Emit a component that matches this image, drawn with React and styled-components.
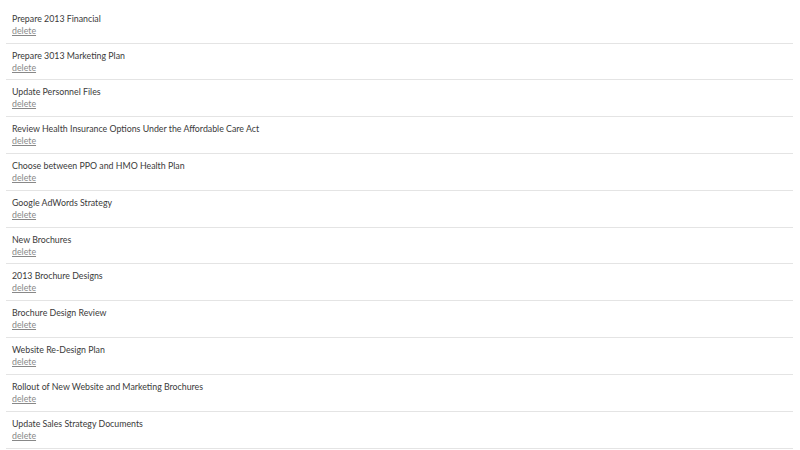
import React from "react";
import styled, { createGlobalStyle } from "styled-components";

const GlobalStyle = createGlobalStyle`
  body {
    margin: 0;
    background: #fff;
    font-family: Lato, "Open Sans", sans-serif;
  }
`;

const List = styled.ul`
  list-style: none;
  margin: 0;
  padding: 6.8px 7px 0 6px;
`;

const Row = styled.li`
  padding: 6px;
  height: 23.82px;
  border-bottom: 1px solid #e4e4e4;
  display: flex;
  flex-direction: column;
`;

const Title = styled.div`
  font-size: 8.8px;
  line-height: 12px;
  color: #3a3a3a;
  white-space: nowrap;
`;

const Delete = styled.a`
  font-size: 8.8px;
  line-height: 12px;
  color: #888;
  text-decoration: underline;
  cursor: pointer;
  align-self: flex-start;
`;

const tasks = [
  "Prepare 2013 Financial",
  "Prepare 3013 Marketing Plan",
  "Update Personnel Files",
  "Review Health Insurance Options Under the Affordable Care Act",
  "Choose between PPO and HMO Health Plan",
  "Google AdWords Strategy",
  "New Brochures",
  "2013 Brochure Designs",
  "Brochure Design Review",
  "Website Re-Design Plan",
  "Rollout of New Website and Marketing Brochures",
  "Update Sales Strategy Documents",
];

export default function App() {
  return (
    <>
      <GlobalStyle />
      <List>
        {tasks.map((t) => (
          <Row key={t}>
            <Title>{t}</Title>
            <Delete>delete</Delete>
          </Row>
        ))}
      </List>
    </>
  );
}
